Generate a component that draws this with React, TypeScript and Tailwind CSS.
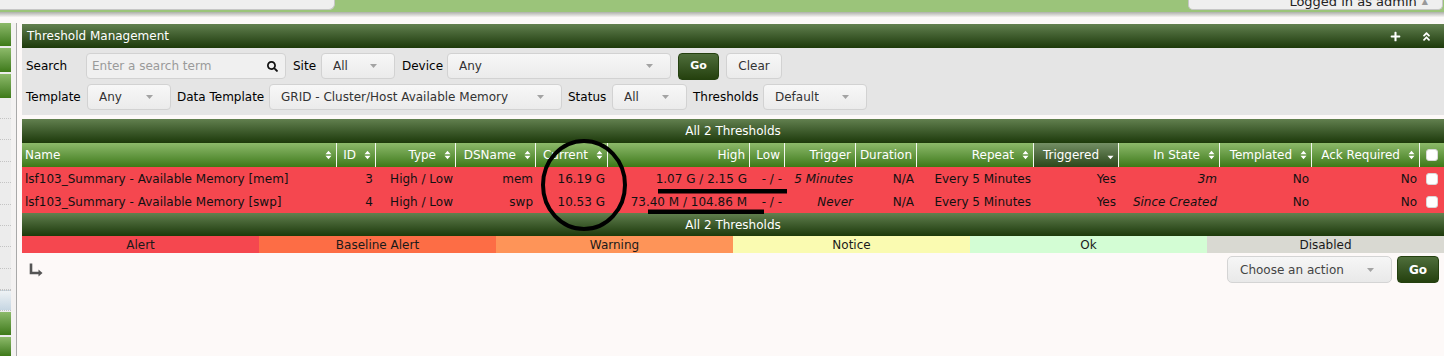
import { FaSearch, FaPlus, FaAngleDoubleUp } from 'react-icons/fa';

type Col = {
  label: string;
  w: string;
  sort?: 'both' | 'down';
  active?: boolean;
};

const cols: Col[] = [
  { label: 'Name', w: 'w-[315px]', sort: 'both' },
  { label: 'ID', w: 'w-[39px]', sort: 'both' },
  { label: 'Type', w: 'w-[80px]', sort: 'both' },
  { label: 'DSName', w: 'w-[80px]', sort: 'both' },
  { label: 'Current', w: 'w-[72px]', sort: 'both' },
  { label: 'High', w: 'w-[142px]' },
  { label: 'Low', w: 'w-[35px]' },
  { label: 'Trigger', w: 'w-[71px]' },
  { label: 'Duration', w: 'w-[61px]' },
  { label: 'Repeat', w: 'w-[117px]', sort: 'both' },
  { label: 'Triggered', w: 'w-[85px]', sort: 'down', active: true },
  { label: 'In State', w: 'w-[101px]', sort: 'both' },
  { label: 'Templated', w: 'w-[92px]', sort: 'both' },
  { label: 'Ack Required', w: 'w-[108px]', sort: 'both' },
];

const rows = [
  ['lsf103_Summary - Available Memory [mem]', '3', 'High / Low', 'mem', '16.19 G', '1.07 G / 2.15 G', '- / -', '5 Minutes', 'N/A', 'Every 5 Minutes', 'Yes', '3m', 'No', 'No'],
  ['lsf103_Summary - Available Memory [swp]', '4', 'High / Low', 'swp', '10.53 G', '73.40 M / 104.86 M', '- / -', 'Never', 'N/A', 'Every 5 Minutes', 'Yes', 'Since Created', 'No', 'No'],
];

const italicCols = [7, 11];

const legend = [
  { label: 'Alert', bg: 'bg-[#f5474f]' },
  { label: 'Baseline Alert', bg: 'bg-[#fd6d45]' },
  { label: 'Warning', bg: 'bg-[#fe9458]' },
  { label: 'Notice', bg: 'bg-[#fafbb1]' },
  { label: 'Ok', bg: 'bg-[#d3fdd4]' },
  { label: 'Disabled', bg: 'bg-[#d9d9d2]' },
];

function SortIcon() {
  return (
    <svg width="7" height="10" viewBox="0 0 7 10" className="shrink-0">
      <path d="M0.5 4.2 3.5 0.8 6.5 4.2Z M0.5 5.8 3.5 9.2 6.5 5.8Z" fill="white" />
    </svg>
  );
}

function SortDown() {
  return (
    <svg width="7" height="10" viewBox="0 0 7 10" className="shrink-0">
      <path d="M0.5 5.8 3.5 9.2 6.5 5.8Z" fill="white" />
    </svg>
  );
}

function Caret() {
  return (
    <svg width="7" height="4" viewBox="0 0 7 4" className="shrink-0">
      <path d="M0 0h7L3.5 4z" fill="#a3a3a3" />
    </svg>
  );
}

function Select({ value, w }: { value: string; w: string }) {
  return (
    <div
      className={`${w} h-[26px] shrink-0 flex items-center justify-between pl-[11px] pr-[17px] rounded-[4px] border border-[#d2d2d2] bg-gradient-to-b from-[#f7f7f7] to-[#ebebeb] text-[#333]`}
    >
      <span className="whitespace-nowrap overflow-hidden">{value}</span>
      <Caret />
    </div>
  );
}

function Checkbox() {
  return <div className="w-[12px] h-[12px] rounded-[3px] bg-white border border-[#d8d8d8]" />;
}

function SideItem() {
  return <div className="h-[22px] border-b border-dotted border-[#c4c4c4]" />;
}

export default function App() {
  return (
    <div className="relative w-[1444px] h-[356px] overflow-hidden bg-[#fdf9f8] text-[12px] text-black font-['DejaVu_Sans',sans-serif]">
      {/* top strip */}
      <div className="h-[23px] flex flex-col">
        <div className="h-[12px] bg-[#9bc47a] flex items-start">
          <div className="w-[335px] h-[10px] bg-[#efefef] border-b border-r border-[#c6c6c6] rounded-br-[6px]" />
          <div className="ml-auto mr-[1px] w-[255px] h-[10px] overflow-hidden bg-[#efefef] border-b border-l border-r border-[#c6c6c6] rounded-bl-[5px] rounded-br-[5px] flex justify-end items-start pr-[14px] gap-[5px]">
            <span className="-mt-[6px] leading-[16px] text-[13px] text-[#222] whitespace-nowrap">Logged in as admin</span>
            <span className="-mt-[4px] leading-[12px] text-[8px] text-[#999]">▲</span>
          </div>
        </div>
        <div className="h-[5px] bg-gradient-to-b from-[#adb0a9] to-[#f5f2f2]" />
        <div className="flex-1 bg-[#fbf8f8]" />
      </div>

      <div className="flex">
        {/* sidebar */}
        <div className="w-[11px] h-[333px] bg-[#ececec] flex flex-col">
          <div className="h-[24px] bg-gradient-to-b from-[#8dba6a] to-[#3e7a17]" />
          <div className="h-[24px] mt-[2px] bg-gradient-to-b from-[#8dba6a] to-[#3e7a17]" />
          <div className="h-[25px] mt-[2px] bg-gradient-to-b from-[#8dba6a] to-[#3e7a17]" />
          <SideItem />
          <SideItem />
          <SideItem />
          <SideItem />
          <SideItem />
          <SideItem />
          <SideItem />
          <SideItem />
          <SideItem />
          <div className="h-[22px] bg-gradient-to-b from-[#eef2f5] to-[#c6d6e2] border-y border-dotted border-[#c4c4c4]" />
          <div className="h-[23px] mt-[1px] bg-gradient-to-b from-[#8dba6a] to-[#3e7a17]" />
          <div className="h-[20px] mt-[2px] bg-gradient-to-b from-[#8dba6a] to-[#3e7a17]" />
        </div>
        <div className="w-[5px] bg-[#f4f2f2]" />
        <div className="w-[1px] bg-[#a9a9a9]" />
        <div className="w-[5px]" />

        {/* main */}
        <div className="w-[1422px] flex flex-col pt-[1px]">
          <div className="h-[24px] flex items-center justify-between pl-[5px] pr-[12px] bg-gradient-to-b from-[#62804f] to-[#1d3a0a] text-white">
            <span>Threshold Management</span>
            <div className="flex items-center gap-[20px]">
              <FaPlus size={11} />
              <FaAngleDoubleUp size={11} />
            </div>
          </div>

          <div className="h-[67px] bg-[#e5e5e5] flex flex-col gap-[5px] pt-[5px] pl-[4px]">
            <div className="flex items-center h-[26px]">
              <span className="w-[60px]">Search</span>
              <div className="w-[200px] h-[26px] flex items-center justify-between pl-[5px] pr-[7px] rounded-[4px] border border-[#d2d2d2] bg-[#f0f0f0] text-[#9a9a9a]">
                <span>Enter a search term</span>
                <FaSearch size={11} className="text-[#111]" />
              </div>
              <span className="ml-[7px] w-[28px]">Site</span>
              <Select value="All" w="w-[74px]" />
              <span className="ml-[7px] w-[45px]">Device</span>
              <Select value="Any" w="w-[224px]" />
              <button className="ml-[7px] w-[41px] h-[27px] rounded-[4px] border border-[#24400f] bg-gradient-to-b from-[#4f6e3b] to-[#25410e] text-white font-bold text-[11px]">
                Go
              </button>
              <button className="ml-[7px] w-[56px] h-[26px] rounded-[4px] border border-[#d2d2d2] bg-gradient-to-b from-[#f7f7f7] to-[#ebebeb] text-[#333]">
                Clear
              </button>
            </div>
            <div className="flex items-center h-[26px]">
              <span className="w-[61px]">Template</span>
              <Select value="Any" w="w-[84px]" />
              <span className="ml-[6px] w-[92px]">Data Template</span>
              <Select value="GRID - Cluster/Host Available Memory" w="w-[293px]" />
              <span className="ml-[6px] w-[44px]">Status</span>
              <Select value="All" w="w-[75px]" />
              <span className="ml-[6px] w-[70px]">Thresholds</span>
              <Select value="Default" w="w-[104px]" />
            </div>
          </div>

          <div className="h-[4px]" />

          <div className="h-[24px] flex items-center justify-center bg-gradient-to-b from-[#62804f] to-[#1d3a0a] text-white">
            All 2 Thresholds
          </div>

          {/* column headers */}
          <div className="h-[24px] flex bg-gradient-to-b from-[#8dba6a] to-[#3d7915] text-white">
            {cols.map((c, i) => (
              <div
                key={c.label}
                className={`${c.w} shrink-0 h-full flex items-center gap-[8px] border-r border-[#f2f7ee] ${
                  i === 0 ? 'justify-between pl-[3px] pr-[4px]' : 'justify-end pr-[4px]'
                } ${c.active ? 'bg-gradient-to-b from-[#748f65] to-[#2c481a]' : ''} ${c.sort ? '' : 'pr-[3px]'}`}
              >
                <span className="whitespace-nowrap">{c.label}</span>
                {c.sort === 'both' && <SortIcon />}
                {c.sort === 'down' && <SortDown />}
              </div>
            ))}
            <div className="w-[24px] shrink-0 flex items-center justify-center">
              <Checkbox />
            </div>
          </div>

          {rows.map((r) => (
            <div key={r[0]} className="h-[23px] flex bg-[#f5474f] text-[#111]">
              {r.map((v, i) => (
                <div
                  key={i}
                  className={`${cols[i].w} shrink-0 h-full flex items-center whitespace-nowrap ${
                    i === 0 ? 'pl-[3px]' : 'justify-end pr-[3px]'
                  } ${italicCols.includes(i) ? 'italic' : ''}`}
                >
                  {v}
                </div>
              ))}
              <div className="w-[24px] shrink-0 flex items-center justify-center">
                <Checkbox />
              </div>
            </div>
          ))}

          <div className="h-[23px] flex items-center justify-center bg-gradient-to-b from-[#62804f] to-[#1d3a0a] text-white">
            All 2 Thresholds
          </div>

          <div className="h-[17px] grid grid-cols-6 text-[#1a1a1a]">
            {legend.map((l) => (
              <div key={l.label} className={`${l.bg} flex items-center justify-center leading-none`}>
                {l.label}
              </div>
            ))}
          </div>

          <div className="flex justify-between items-start pt-[3px] pr-[5px]">
            <svg width="14" height="14" viewBox="0 0 14 14" className="ml-[7px] mt-[7px]">
              <path d="M2 0.5V10H10" stroke="#555" strokeWidth="2.6" fill="none" />
              <path d="M9.5 6.5 13.5 10 9.5 13.5Z" fill="#555" />
            </svg>
            <div className="flex items-center gap-[5px]">
              <div className="w-[165px] h-[27px] flex items-center justify-between pl-[12px] pr-[17px] rounded-[5px] border border-[#d4d4d4] bg-gradient-to-b from-[#f6f6f6] to-[#e9e9e9] text-[#444]">
                <span>Choose an action</span>
                <Caret />
              </div>
              <button className="w-[42px] h-[27px] rounded-[4px] border border-[#24400f] bg-gradient-to-b from-[#4f6e3b] to-[#25410e] text-white font-bold">
                Go
              </button>
            </div>
          </div>
        </div>
      </div>

      {/* hand-drawn annotations on the screenshot */}
      <svg className="absolute inset-0 pointer-events-none" width="1444" height="356" viewBox="0 0 1444 356">
        <ellipse cx="584" cy="185" rx="41" ry="44" stroke="black" strokeWidth="4" fill="none" />
        <rect x="658" y="189" width="129" height="4.5" fill="black" />
        <rect x="648" y="209.5" width="116" height="4.5" fill="black" />
      </svg>
    </div>
  );
}
